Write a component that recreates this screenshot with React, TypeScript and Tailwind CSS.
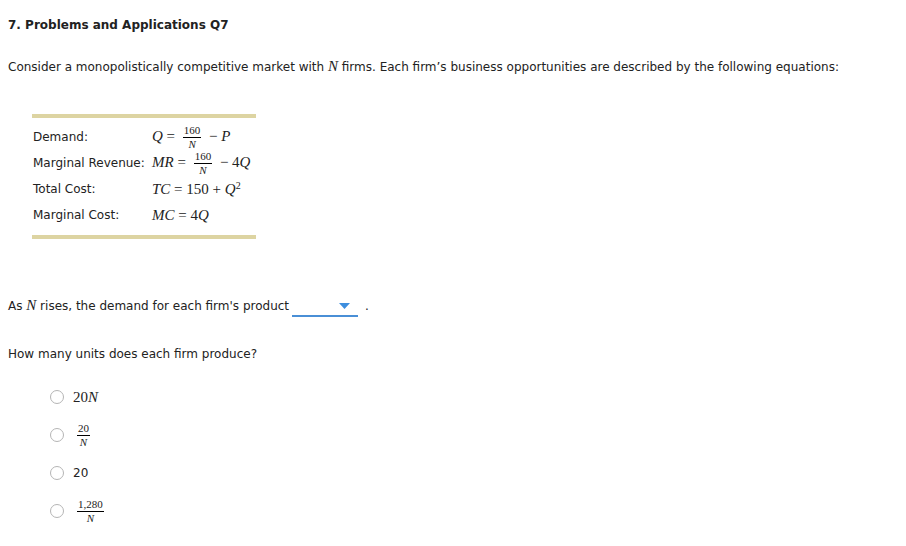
import React from "react";

const sans = "font-['DejaVu_Sans',Verdana,sans-serif]";
const serif = "font-['Liberation_Serif','Times_New_Roman',serif]";

const Frac = ({ num, den }: { num: string; den: string }) => (
  <span className={`inline-flex flex-col items-center align-middle mx-[4px] ${serif} text-[11px] leading-[11px]`}>
    <span className="px-[1px] pb-[1px]">{num}</span>
    <span className="border-t border-black w-full text-center italic px-[1px] pt-[1px]">{den}</span>
  </span>
);

const V = ({ children }: { children: React.ReactNode }) => (
  <span className={`${serif} italic text-[15px]`}>{children}</span>
);

const S = ({ children }: { children: React.ReactNode }) => (
  <span className={`${serif} text-[15px]`}>{children}</span>
);

const rows: { label: string; math: React.ReactNode }[] = [
  {
    label: "Demand:",
    math: (
      <>
        <V>Q</V>
        <S>{" = "}</S>
        <Frac num="160" den="N" />
        <S>{" − "}</S>
        <V>P</V>
      </>
    ),
  },
  {
    label: "Marginal Revenue:",
    math: (
      <>
        <V>MR</V>
        <S>{" = "}</S>
        <Frac num="160" den="N" />
        <S>{" − 4"}</S>
        <V>Q</V>
      </>
    ),
  },
  {
    label: "Total Cost:",
    math: (
      <>
        <V>TC</V>
        <S>{" = 150 + "}</S>
        <V>Q</V>
        <sup className={`${serif} text-[10px]`}>2</sup>
      </>
    ),
  },
  {
    label: "Marginal Cost:",
    math: (
      <>
        <V>MC</V>
        <S>{" = 4"}</S>
        <V>Q</V>
      </>
    ),
  },
];

const options: React.ReactNode[] = [
  <span className={`${serif} text-[15px]`}>
    20<span className="italic">N</span>
  </span>,
  <Frac num="20" den="N" />,
  <span className={`${sans} text-[12px]`}>20</span>,
  <Frac num="1,280" den="N" />,
];

export default function App() {
  return (
    <div className={`w-[906px] h-[546px] bg-white text-[#222] ${sans} text-[12px] px-2 overflow-hidden`}>
      <h1 className="font-bold text-[12px] leading-4 pt-[17px]">7. Problems and Applications Q7</h1>

      <p className="mt-[25px] leading-4">
        Consider a monopolistically competitive market with <V>N</V> firms. Each firm’s business opportunities are
        described by the following equations:
      </p>

      <div className="ml-6 mt-[39px] w-[224px] border-t-4 border-b-4 border-[#ddd4a2] pt-[6px] pb-[7px]">
        {rows.map((r) => (
          <div key={r.label} className="flex items-center h-[26px]">
            <span className="w-[120px] pl-[1px] whitespace-nowrap">{r.label}</span>
            <span className="whitespace-pre leading-[20px]">{r.math}</span>
          </div>
        ))}
      </div>

      <div className="mt-[58px] flex items-end leading-4">
        <span>
          As <V>N</V> rises, the demand for each firm's product
        </span>
        <span className="relative ml-[3px] w-[66px] h-[18px] border-b-2 border-[#4a8fd6] mb-[-3px]">
          <svg className="absolute right-[8px] top-[4px]" width="11" height="6" viewBox="0 0 11 6">
            <path d="M0 0 H11 L5.5 6 Z" fill="#3d8ede" />
          </svg>
        </span>
        <span className="ml-[7px]">.</span>
      </div>

      <p className="mt-[32px] leading-4">How many units does each firm produce?</p>

      <div className="mt-[16px] ml-[42px] flex flex-col">
        {options.map((o, i) => (
          <label key={i} className="flex items-center h-[38px]">
            <span className="w-[14px] h-[14px] rounded-full border border-[#b5b5b5] bg-white mr-[9px]" />
            {o}
          </label>
        ))}
      </div>
    </div>
  );
}
